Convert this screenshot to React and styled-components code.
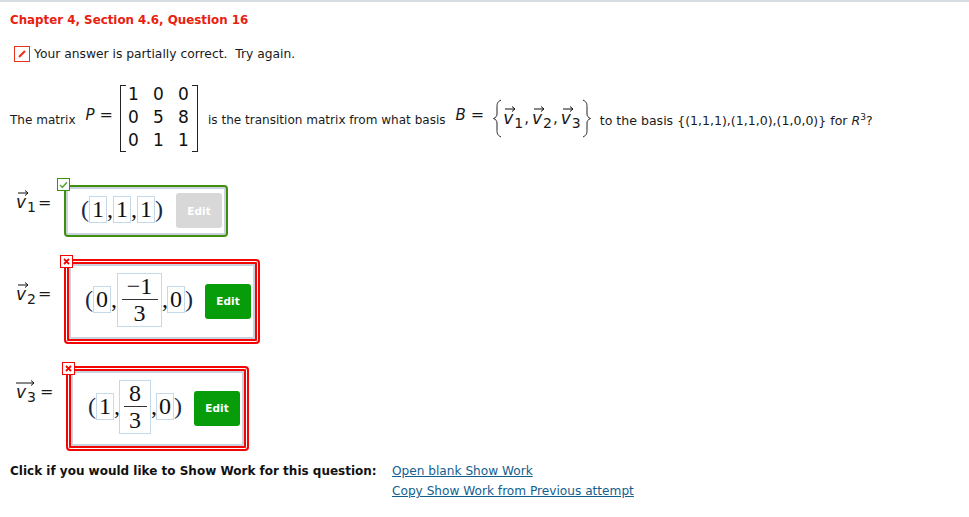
import React from 'react'
import styled, { createGlobalStyle } from 'styled-components'

const Global = createGlobalStyle`
  html, body { margin: 0; padding: 0; background: #fff; }
  body { font-family: "DejaVu Sans", Verdana, sans-serif; font-size: 12px; color: #1a1a1a; }
`

const Page = styled.div`
  width: 969px;
  height: 517px;
  overflow: hidden;
  box-sizing: border-box;
  border-top: 2px solid #d8dde4;
  padding: 0 10px;
`

const Title = styled.h1`
  margin: 11px 0 0;
  font-size: 11.85px;
  line-height: 14px;
  font-weight: 700;
  color: #e8210f;
`

const Status = styled.div`
  display: flex;
  align-items: center;
  gap: 4px;
  margin: 19px 0 0 4px;
  font-size: 12.3px;
  line-height: 16px;
  white-space: pre;
`

const StatusIcon = styled.span`
  display: flex;
  align-items: center;
  justify-content: center;
  width: 16px;
  height: 16px;
  box-sizing: border-box;
  border: 1px solid #e8321a;
`

const Question = styled.div`
  display: flex;
  align-items: center;
  height: 68px;
  margin-top: 22px;
  font-size: 12.05px;
  white-space: nowrap;
`

const Sentence = styled.span`
  margin-left: ${p => p.$left}px;
  font-size: ${p => p.$size || 12.05}px;
  position: relative;
  top: 2px;
`

const MathLabel = styled.span`
  display: inline-flex;
  align-items: center;
  margin-left: ${p => p.$left}px;
  font-size: 15px;
  line-height: 20px;
  position: relative;
  top: -3px;
`

const Var = styled.i`
  font-style: italic;
  font-size: ${p => p.$size || 15}px;
`

const Equals = styled.span`
  margin: 0 ${p => p.$right || 6}px 0 ${p => p.$left || 5}px;
  font-size: 16px;
`

const Matrix = styled.span`
  display: grid;
  grid-template-columns: repeat(3, 25px);
  grid-template-rows: repeat(3, 23px);
  align-items: start;
  justify-items: center;
  box-sizing: border-box;
  width: 76px;
  height: 67px;
  font-size: 17px;
  line-height: 18px;
  color: #111;
  position: relative;
  &::before, &::after {
    content: "";
    position: absolute;
    top: 0;
    bottom: 0;
    width: 5px;
    border: 1px solid #222;
  }
  &::before { left: -1px; border-right: 0; }
  &::after { right: -1px; border-left: 0; }
`

const BasisSet = styled.span`
  display: inline-flex;
  align-items: center;
  font-size: 15px;
`

const VecWrap = styled.span`
  display: inline-flex;
  align-items: baseline;
  position: relative;
`

const Arrow = styled.svg`
  position: absolute;
  left: ${p => p.$left}px;
  top: -3px;
`

const Sub = styled.span`
  font-size: 14px;
  position: relative;
  top: 4px;
  margin-left: 1px;
`

const Comma = styled.span`
  margin: 0 3px 0 1px;
`

const Vec = ({ n, wide }) => {
  const w = wide ? 19 : 11
  return (
    <VecWrap>
      <Var $size={17}>v</Var>
      <Sub>{n}</Sub>
      <Arrow $left={wide ? 0 : 2} width={w} height="8" viewBox={`0 0 ${w} 8`} fill="none" stroke="#111" strokeWidth="1">
        <path d={`M0 4H${w - 1}M${w - 4} 1.5L${w - 1} 4L${w - 4} 6.5`} />
      </Arrow>
    </VecWrap>
  )
}

const AnswerRow = styled.div`
  display: flex;
  align-items: center;
  margin-top: ${p => p.$top}px;
`

const AnswerLabel = styled.span`
  display: flex;
  align-items: center;
  width: ${p => p.$width}px;
  padding-left: 6px;
  box-sizing: border-box;
  font-size: 15px;
  position: relative;
  top: ${p => p.$shift}px;
`

const Box = styled.div`
  position: relative;
  display: flex;
  align-items: center;
  box-sizing: border-box;
  width: ${p => p.$width}px;
  height: ${p => p.$height}px;
  padding-left: ${p => p.$pad}px;
  border-radius: 4px;
  background: #fff;
  ${p => p.$ok
    ? `border: 2px solid #3f8f0e; box-shadow: inset 0 0 0 2px #c9d2de;`
    : `border: 2px solid #f20505; box-shadow: inset 0 0 0 1px #fff, inset 0 0 0 3px #f20505, inset 0 0 0 5px #c9d2de;`}
`

const Badge = styled.span`
  position: absolute;
  left: ${p => (p.$ok ? -9 : -6)}px;
  top: ${p => (p.$ok ? -9 : -6)}px;
  display: flex;
  align-items: center;
  justify-content: center;
  width: 13px;
  height: 13px;
  box-sizing: border-box;
  border: 1px solid ${p => (p.$ok ? '#3f8f0e' : '#f20505')};
  background: #fff;
`

const Formula = styled.span`
  display: flex;
  align-items: center;
  margin-bottom: 4px;
  font-family: "Liberation Serif", "Times New Roman", serif;
  font-size: 24px;
  color: #111;
`

const Paren = styled.span`
  color: #14284a;
`

const Slot = styled.span`
  display: inline-flex;
  align-items: center;
  justify-content: center;
  box-sizing: border-box;
  width: 18px;
  height: 27px;
  border: 1px solid #c4daea;
`

const FractionSlot = styled.span`
  display: inline-flex;
  flex-direction: column;
  align-items: center;
  justify-content: center;
  box-sizing: border-box;
  width: ${p => p.$width}px;
  height: 54px;
  border: 1px solid #c4daea;
  line-height: 24px;
`

const Bar = styled.span`
  display: block;
  flex-shrink: 0;
  width: ${p => p.$width}px;
  height: 1px;
  background: #333;
  margin: 1px 0;
`

const Sep = styled.span`
  width: ${p => p.$width || 6}px;
`

const EditButton = styled.button`
  width: 46px;
  height: 35px;
  margin: 0 0 1px ${p => p.$left}px;
  padding: 0;
  border: 0;
  border-radius: 3px;
  background: ${p => (p.disabled ? '#d8d8d8' : '#069c0a')};
  color: #fff;
  font-family: "DejaVu Sans", Verdana, sans-serif;
  font-size: 10.5px;
  font-weight: 700;
`

const Footer = styled.div`
  display: flex;
  margin-top: 10px;
  line-height: 20px;
`

const Prompt = styled.strong`
  width: 382px;
  font-weight: 700;
  color: #111;
  font-size: 12px;
`

const Links = styled.div`
  display: flex;
  flex-direction: column;
  font-size: 12.15px;
`

const Link = styled.a`
  color: #12608f;
  text-decoration: underline;
`

const Tick = () => (
  <svg width="9" height="8" viewBox="0 0 9 8" fill="none" stroke="#5fa83a" strokeWidth="1.6">
    <path d="M1 4l2.4 2.4L8 1.2" />
  </svg>
)

const Cross = () => (
  <svg width="7" height="7" viewBox="0 0 7 7" fill="none" stroke="#f20505" strokeWidth="1.8">
    <path d="M1 1l5 5M6 1l-5 5" />
  </svg>
)

const Pencil = () => (
  <svg width="10" height="10" viewBox="0 0 10 10" fill="none" stroke="#e8321a" strokeWidth="2.2">
    <path d="M2 8L8 2" />
  </svg>
)

const App = () => (
  <Page>
    <Global />
    <Title>Chapter 4, Section 4.6, Question 16</Title>
    <Status>
      <StatusIcon><Pencil /></StatusIcon>
      <span>Your answer is partially correct.  Try again.</span>
    </Status>

    <Question>
      <Sentence $left={0}>The matrix</Sentence>
      <MathLabel $left={10}>
        <Var>P</Var><Equals $right={8}>=</Equals>
      </MathLabel>
      <Matrix>
        <span>1</span><span>0</span><span>0</span>
        <span>0</span><span>5</span><span>8</span>
        <span>0</span><span>1</span><span>1</span>
      </Matrix>
      <Sentence $left={11}>is the transition matrix from what basis</Sentence>
      <MathLabel $left={10}>
        <Var>B</Var><Equals $right={8}>=</Equals>
      </MathLabel>
      <BasisSet>
        <svg width="11" height="39" viewBox="0 0 11 39" fill="none" stroke="#222" strokeWidth="1">
          <path d="M9 1C5 3 5 5 5 9V15C5 17 4 18.500 1.500 19.500C4 20.500 5 22 5 24V30C5 34 5 36 9 38" />
        </svg>
        <Vec n="1" /><Comma>,</Comma>
        <Vec n="2" /><Comma>,</Comma>
        <Vec n="3" />
        <svg width="11" height="39" viewBox="0 0 11 39" fill="none" stroke="#222" strokeWidth="1">
          <path d="M2 1C6 3 6 5 6 9V15C6 17 7 18.500 9.500 19.500C7 20.500 6 22 6 24V30C6 34 6 36 2 38" />
        </svg>
      </BasisSet>
      <Sentence $left={8} $size={12.55}>to the basis {'{'}(1,1,1),(1,1,0),(1,0,0){'}'} for <i>R</i><sup style={{ fontSize: 9, lineHeight: 0 }}>3</sup>?</Sentence>
    </Question>

    <AnswerRow $top={33}>
      <AnswerLabel $width={54} $shift={-9}>
        <Vec n="1" /><Equals $left={2}>=</Equals>
      </AnswerLabel>
      <Box $ok $width={164} $height={52} $pad={15}>
        <Badge $ok><Tick /></Badge>
        <Formula>
          <Paren>(</Paren><Slot>1</Slot><Sep>,</Sep><Slot>1</Slot><Sep>,</Sep><Slot>1</Slot><Paren>)</Paren>
        </Formula>
        <EditButton disabled $left={13}>Edit</EditButton>
      </Box>
    </AnswerRow>

    <AnswerRow $top={22}>
      <AnswerLabel $width={54} $shift={-8}>
        <Vec n="2" /><Equals $left={2}>=</Equals>
      </AnswerLabel>
      <Box $width={196} $height={85} $pad={19}>
        <Badge><Cross /></Badge>
        <Formula>
          <Paren>(</Paren><Slot>0</Slot><Sep>,</Sep>
          <FractionSlot $width={45}>−1<Bar $width={36} />3</FractionSlot>
          <Sep $width={5}>,</Sep><Slot>0</Slot><Paren>)</Paren>
        </Formula>
        <EditButton $left={12}>Edit</EditButton>
      </Box>
    </AnswerRow>

    <AnswerRow $top={22}>
      <AnswerLabel $width={56} $shift={-17}>
        <Vec n="3" wide /><Equals $left={4}>=</Equals>
      </AnswerLabel>
      <Box $width={183} $height={85} $pad={20}>
        <Badge><Cross /></Badge>
        <Formula>
          <Paren>(</Paren><Slot>1</Slot><Sep $width={5}>,</Sep>
          <FractionSlot $width={32}>8<Bar $width={23} />3</FractionSlot>
          <Sep $width={5}>,</Sep><Slot>0</Slot><Paren>)</Paren>
        </Formula>
        <EditButton $left={12}>Edit</EditButton>
      </Box>
    </AnswerRow>

    <Footer>
      <Prompt>Click if you would like to Show Work for this question:</Prompt>
      <Links>
        <Link>Open blank Show Work</Link>
        <Link>Copy Show Work from Previous attempt</Link>
      </Links>
    </Footer>
  </Page>
)

export default App
